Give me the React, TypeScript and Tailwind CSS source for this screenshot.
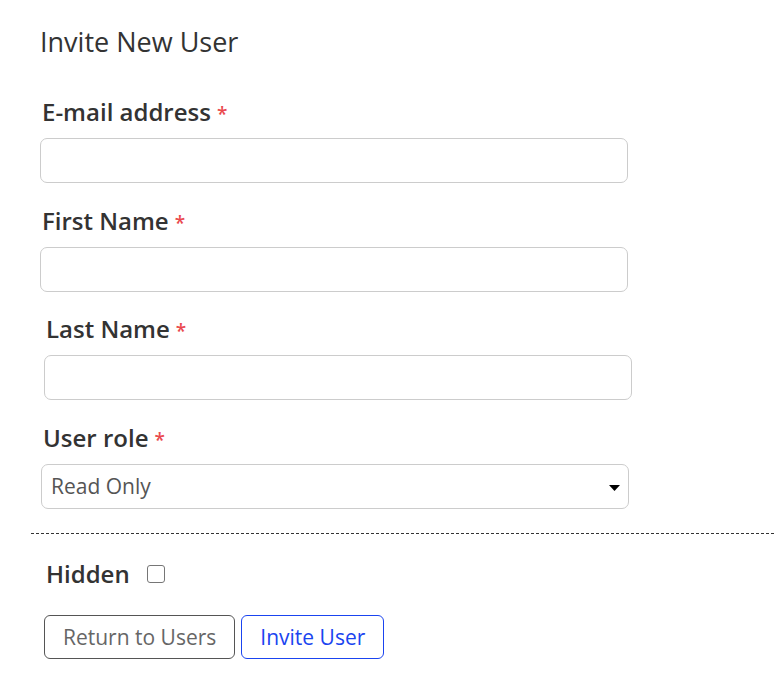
import { useState } from 'react';

const font = { fontFamily: '"Open Sans", "Noto Sans", sans-serif' };

function Label({ text, className = '' }: { text: string; className?: string }) {
  return (
    <label className={`block h-[33px] leading-[33px] text-[24px] font-semibold text-[#333] mb-[10px] ${className}`}>
      {text}
      <span className="ml-[6px] text-[19px] text-[#ea4a4f]">*</span>
    </label>
  );
}

export default function App() {
  const [role, setRole] = useState('Read Only');
  const [hidden, setHidden] = useState(false);

  const inputCls = 'block w-[588px] h-[45px] rounded-[7px] border border-[#cccccc] bg-white px-[9px] text-[21px] text-[#555] outline-none';

  return (
    <div className="min-h-screen bg-white pt-[23px] pl-[31px]" style={font}>
      <h1 className="ml-[9px] h-[37px] leading-[37px] text-[27px] font-normal text-[#333]">Invite New User</h1>

      <div className="mt-[35px] ml-[9px]">
        <div className="mb-[21px]">
          <Label text="E-mail address" className="ml-[2px]" />
          <input type="email" className={inputCls} />
        </div>

        <div className="mb-[20px]">
          <Label text="First Name" className="ml-[2px]" />
          <input type="text" className={inputCls} />
        </div>

        <div className="mb-[21px] ml-[4px]">
          <Label text="Last Name" className="ml-[2px]" />
          <input type="text" className={inputCls} />
        </div>

        <div className="ml-[1px]">
          <Label text="User role" className="ml-[2px]" />
          <div className="relative w-[588px]">
            <select
              value={role}
              onChange={e => setRole(e.target.value)}
              className={`${inputCls} appearance-none pr-[30px]`}
            >
              <option>Read Only</option>
              <option>Editor</option>
              <option>Administrator</option>
            </select>
            <svg className="pointer-events-none absolute right-[9px] top-[21px]" width="11" height="6" viewBox="0 0 11 6">
              <path d="M0 0h11L5.5 6z" fill="#000" />
            </svg>
          </div>
        </div>
      </div>

      <hr className="mt-[24px] border-0 border-t border-dashed border-[#333]" />

      <div className="mt-[23px] ml-[15px] flex items-center h-[33px]">
        <span className="text-[24px] font-semibold text-[#333] leading-[33px]">Hidden</span>
        <input
          type="checkbox"
          checked={hidden}
          onChange={e => setHidden(e.target.checked)}
          className="ml-[17px] w-[18px] h-[18px] appearance-none rounded-[3px] border-[1.5px] border-[#767676] bg-white checked:bg-[#1a44f0]"
        />
      </div>

      <div className="mt-[25px] ml-[13px] flex gap-[6px]">
        <button className="h-[44px] pt-[1px] px-[18px] rounded-[6px] border border-[#555] bg-white text-[21px] text-[#666]">
          Return to Users
        </button>
        <button className="h-[44px] pt-[1px] px-[18px] rounded-[6px] border border-[#1a44f0] bg-white text-[21px] text-[#1a44f0]">
          Invite User
        </button>
      </div>
    </div>
  );
}
